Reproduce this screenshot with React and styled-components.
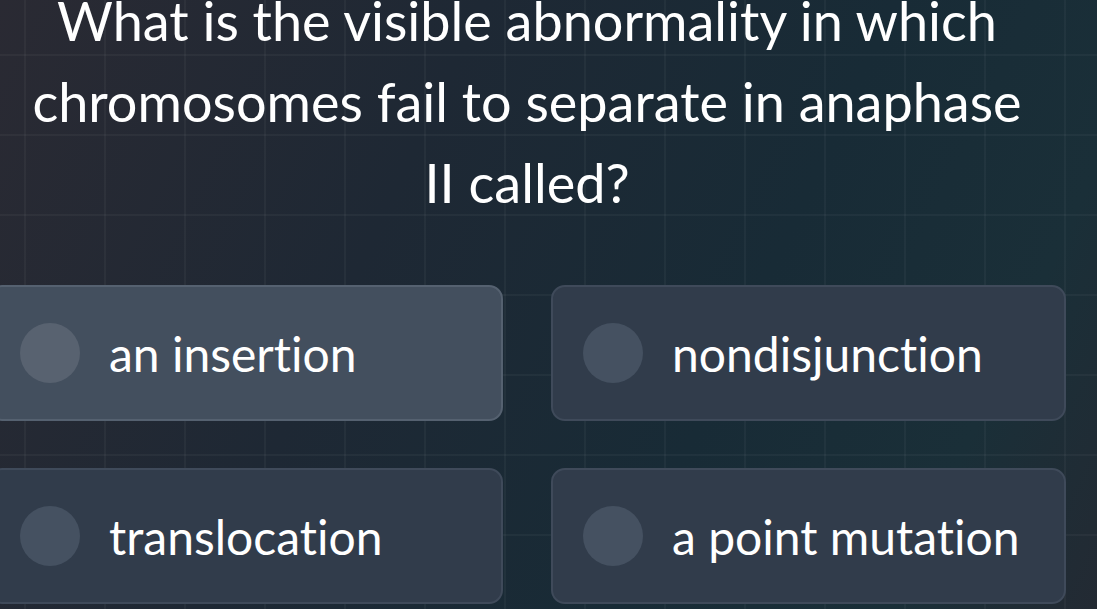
import React from 'react';
import styled, { createGlobalStyle } from 'styled-components';

const GlobalStyle = createGlobalStyle`
  html, body {
    margin: 0;
    padding: 0;
  }
  body {
    font-family: Lato, "Noto Sans", sans-serif;
    font-variant-ligatures: none;
    background-color: #1c2833;
    overflow: hidden;
  }
`;

const Page = styled.div`
  width: 1097px;
  height: 609px;
  overflow: hidden;
  background-image:
    linear-gradient(rgba(255, 255, 255, 0.035) 2px, transparent 2px),
    linear-gradient(90deg, rgba(255, 255, 255, 0.035) 2px, transparent 2px),
    linear-gradient(115deg, #2a2a33 0%, #1e2834 35%, #182b36 65%, #1a2f38 85%, #232a33 100%);
  background-size: 80px 80px, 80px 80px, 100% 100%;
  background-position: 24px 54px, 24px 54px, 0 0;
`;

const Content = styled.div`
  width: 1078px;
  margin-left: -12px;
  display: flex;
  flex-direction: column;
`;

const Question = styled.h1`
  margin: -20px 0 0;
  font-size: 54px;
  line-height: 81px;
  font-weight: 400;
  color: #ffffff;
  text-align: center;
  padding: 0 40px;
`;

const Options = styled.div`
  margin-top: 62px;
  display: grid;
  grid-template-columns: 1fr 1fr;
  column-gap: 48px;
  row-gap: 47px;
`;

const Option = styled.div`
  height: 136px;
  box-sizing: border-box;
  display: flex;
  align-items: center;
  gap: 29px;
  padding: 0 30px;
  border-radius: 14px;
  background: ${p => (p.active ? '#434f5e' : '#313c4b')};
  border: 2px solid ${p => (p.active ? '#556170' : '#3f4a5a')};
`;

const Dot = styled.span`
  width: 60px;
  height: 60px;
  flex: none;
  border-radius: 50%;
  background: ${p => (p.active ? '#586270' : '#455161')};
`;

const Label = styled.span`
  font-size: 48px;
  color: #ffffff;
`;

const answers = ['an insertion', 'nondisjunction', 'translocation', 'a point mutation'];

export default function App() {
  return (
    <Page>
      <GlobalStyle />
      <Content>
        <Question>
          What is the visible abnormality in which chromosomes fail to separate in anaphase II called?
        </Question>
        <Options>
          {answers.map((a, i) => (
            <Option key={a} active={i === 0}>
              <Dot active={i === 0} />
              <Label>{a}</Label>
            </Option>
          ))}
        </Options>
      </Content>
    </Page>
  );
}
